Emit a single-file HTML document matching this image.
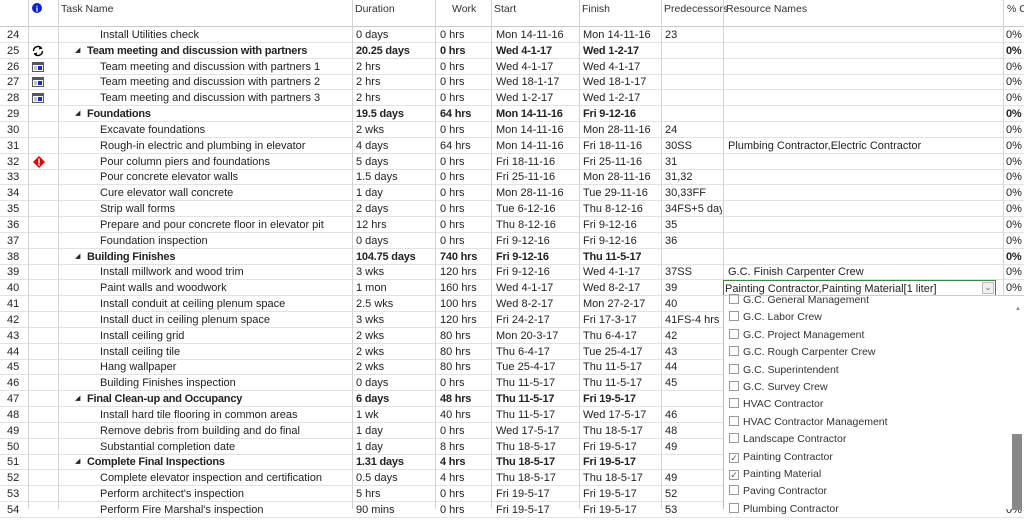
<!DOCTYPE html>
<html><head><meta charset="utf-8">
<style>
*{margin:0;padding:0;box-sizing:border-box}
body{width:1024px;height:509px;overflow:hidden;background:#fff;font-family:"Liberation Sans",sans-serif;font-size:11px;color:#222;position:relative}
.hdr{position:absolute;left:0;top:0;width:1024px;height:27px;background:#fff;border-bottom:1px solid #c8c8c8}
.h{position:absolute;top:3px;font-size:10.5px;color:#333;white-space:nowrap}
.vl{position:absolute;top:0;width:1px;background:#d4d4d4;height:509px}
.row{position:absolute;left:0;width:1024px;height:16px;border-bottom:1px solid #e2e2e2}
.c{position:absolute;top:2px;white-space:nowrap;overflow:hidden}
.b{font-weight:bold;letter-spacing:-0.2px}
.dd{position:absolute;left:723px;top:295px;width:301px;height:214px;background:#fff;border-left:1px solid #bbb;border-top:1px solid #ccc}
.it{position:absolute;left:5px;height:17px;font-size:10.5px;color:#333;white-space:nowrap}
.cb{display:inline-block;width:10px;height:10px;border:1px solid #999;vertical-align:-1px;margin-right:4px;font-size:9px;line-height:8px;text-align:center;color:#555}
</style></head><body>
<div id="rows"></div>
<div class="hdr">
<svg style="position:absolute;left:32px;top:3px" width="10" height="10"><circle cx="5" cy="5" r="5" fill="#1020d0"/><text x="5" y="8.5" font-size="8" fill="#fff" text-anchor="middle" font-weight="bold" font-family="Liberation Serif">i</text></svg>
<div class="h" style="left:61px">Task Name</div>
<div class="h" style="left:355px">Duration</div>
<div class="h" style="left:452px">Work</div>
<div class="h" style="left:494px">Start</div>
<div class="h" style="left:582px">Finish</div>
<div class="h" style="left:664px">Predecessors</div>
<div class="h" style="left:726px">Resource Names</div>
<div class="h" style="left:1007px">% C</div>
</div>
<div class="vl" style="left:28px"></div><div class="vl" style="left:58px"></div><div class="vl" style="left:352px"></div><div class="vl" style="left:435px"></div><div class="vl" style="left:491px"></div><div class="vl" style="left:579px"></div><div class="vl" style="left:661px"></div><div class="vl" style="left:723px"></div><div class="vl" style="left:1003px"></div>
<div style="position:absolute;left:723px;top:280px;width:273px;height:16px;border:1px solid #3a8a3a;background:#fff;font-size:11px;padding:2px 0 0 1px;white-space:nowrap;overflow:hidden">Painting Contractor,Painting Material[1 liter]</div>
<div style="position:absolute;left:982px;top:282px;width:12px;height:12px;border:1px solid #bbb;background:#f0f0f0;font-size:8px;text-align:center;line-height:10px;color:#666">⌄</div>
<div class="dd" id="dd">
<div style="position:absolute;right:2px;top:138px;width:10px;height:76px;background:#888"></div>
<div style="position:absolute;right:3px;top:10px;font-size:6px;color:#888">▲</div>
</div>
<script>
var R=[
[24,0,'','Install Utilities check','0 days','0 hrs','Mon 14-11-16','Mon 14-11-16','23',''],
[25,1,'r','Team meeting and discussion with partners','20.25 days','0 hrs','Wed 4-1-17','Wed 1-2-17','',''],
[26,2,'k','Team meeting and discussion with partners 1','2 hrs','0 hrs','Wed 4-1-17','Wed 4-1-17','',''],
[27,2,'k','Team meeting and discussion with partners 2','2 hrs','0 hrs','Wed 18-1-17','Wed 18-1-17','',''],
[28,2,'k','Team meeting and discussion with partners 3','2 hrs','0 hrs','Wed 1-2-17','Wed 1-2-17','',''],
[29,1,'','Foundations','19.5 days','64 hrs','Mon 14-11-16','Fri 9-12-16','',''],
[30,0,'','Excavate foundations','2 wks','0 hrs','Mon 14-11-16','Mon 28-11-16','24',''],
[31,0,'','Rough-in electric and plumbing in elevator','4 days','64 hrs','Mon 14-11-16','Fri 18-11-16','30SS','Plumbing Contractor,Electric Contractor'],
[32,0,'d','Pour column piers and foundations','5 days','0 hrs','Fri 18-11-16','Fri 25-11-16','31',''],
[33,0,'','Pour concrete elevator walls','1.5 days','0 hrs','Fri 25-11-16','Mon 28-11-16','31,32',''],
[34,0,'','Cure elevator wall concrete','1 day','0 hrs','Mon 28-11-16','Tue 29-11-16','30,33FF',''],
[35,0,'','Strip wall forms','2 days','0 hrs','Tue 6-12-16','Thu 8-12-16','34FS+5 days',''],
[36,0,'','Prepare and pour concrete floor in elevator pit','12 hrs','0 hrs','Thu 8-12-16','Fri 9-12-16','35',''],
[37,0,'','Foundation inspection','0 days','0 hrs','Fri 9-12-16','Fri 9-12-16','36',''],
[38,1,'','Building Finishes','104.75 days','740 hrs','Fri 9-12-16','Thu 11-5-17','',''],
[39,0,'','Install millwork and wood trim','3 wks','120 hrs','Fri 9-12-16','Wed 4-1-17','37SS','G.C. Finish Carpenter Crew'],
[40,0,'','Paint walls and woodwork','1 mon','160 hrs','Wed 4-1-17','Wed 8-2-17','39',''],
[41,0,'','Install conduit at ceiling plenum space','2.5 wks','100 hrs','Wed 8-2-17','Mon 27-2-17','40',''],
[42,0,'','Install duct in ceiling plenum space','3 wks','120 hrs','Fri 24-2-17','Fri 17-3-17','41FS-4 hrs',''],
[43,0,'','Install ceiling grid','2 wks','80 hrs','Mon 20-3-17','Thu 6-4-17','42',''],
[44,0,'','Install ceiling tile','2 wks','80 hrs','Thu 6-4-17','Tue 25-4-17','43',''],
[45,0,'','Hang wallpaper','2 wks','80 hrs','Tue 25-4-17','Thu 11-5-17','44',''],
[46,0,'','Building Finishes inspection','0 days','0 hrs','Thu 11-5-17','Thu 11-5-17','45',''],
[47,1,'','Final Clean-up and Occupancy','6 days','48 hrs','Thu 11-5-17','Fri 19-5-17','',''],
[48,0,'','Install hard tile flooring in common areas','1 wk','40 hrs','Thu 11-5-17','Wed 17-5-17','46',''],
[49,0,'','Remove debris from building and do final','1 day','0 hrs','Wed 17-5-17','Thu 18-5-17','48',''],
[50,0,'','Substantial completion date','1 day','8 hrs','Thu 18-5-17','Fri 19-5-17','49',''],
[51,1,'','Complete Final Inspections','1.31 days','4 hrs','Thu 18-5-17','Fri 19-5-17','',''],
[52,0,'','Complete elevator inspection and certification','0.5 days','4 hrs','Thu 18-5-17','Thu 18-5-17','49',''],
[53,0,'','Perform architect\'s inspection','5 hrs','0 hrs','Fri 19-5-17','Fri 19-5-17','52',''],
[54,0,'','Perform Fire Marshal\'s inspection','90 mins','0 hrs','Fri 19-5-17','Fri 19-5-17','53','']
];
var h='';
R.forEach(function(r,i){
 var top=27+i*15.83, b=r[1]==1?' b':'';
 var icon='';
 if(r[2]=='r')icon='<svg class="c" style="left:31px;top:1px" width="14" height="14"><path d="M2.5 7a4.5 4.5 0 0 1 8-2.8M11.5 7a4.5 4.5 0 0 1-8 2.8" stroke="#000" stroke-width="1.4" fill="none"/><path d="M8.5 2l3 2.5-3.5 1z M5.5 12l-3-2.5 3.5-1z" fill="#000"/></svg>';
 if(r[2]=='k')icon='<svg class="c" style="left:32px;top:3px" width="12" height="10"><rect x="0.5" y="0.5" width="11" height="9" fill="#fff" stroke="#556"/><rect x="1" y="1" width="10" height="2" fill="#556"/><rect x="6" y="4" width="4" height="4" fill="#1030c0"/><path d="M2 5h3M2 7h3" stroke="#889"/></svg>';
 if(r[2]=='d')icon='<svg class="c" style="left:33px;top:2px" width="12" height="12"><path d="M6 0L12 6 6 12 0 6z" fill="#e00"/><rect x="5.2" y="2.5" width="1.6" height="5" fill="#fff"/><rect x="5.2" y="8.3" width="1.6" height="1.4" fill="#fff"/></svg>';
 var tx=r[1]==1?'<span style="position:absolute;left:75px;top:3px;font-size:7px">◢</span><div class="c'+b+'" style="left:87px">'+r[3]+'</div>':'<div class="c" style="left:100px;width:250px">'+r[3]+'</div>';
 h+='<div class="row" style="top:'+top+'px"><div class="c" style="left:7px">'+r[0]+'</div>'+icon+tx+
 '<div class="c'+b+'" style="left:356px">'+r[4]+'</div><div class="c'+b+'" style="left:440px">'+r[5]+'</div><div class="c'+b+'" style="left:496px">'+r[6]+'</div><div class="c'+b+'" style="left:583px">'+r[7]+'</div><div class="c" style="left:665px;width:57px">'+r[8]+'</div><div class="c" style="left:728px">'+r[9]+'</div><div class="c'+b+'" style="left:1006px">0%</div></div>';
});
document.getElementById('rows').innerHTML=h;
var L=['G.C. General Management','G.C. Labor Crew','G.C. Project Management','G.C. Rough Carpenter Crew','G.C. Superintendent','G.C. Survey Crew','HVAC Contractor','HVAC Contractor Management','Landscape Contractor','Painting Contractor','Painting Material','Paving Contractor','Plumbing Contractor'];
var d='';
L.forEach(function(s,i){var ck=(i==9||i==10)?'✓':'';d+='<div class="it" style="top:'+(-2+i*17.4)+'px"><span class="cb">'+ck+'</span>'+s+'</div>';});
document.getElementById('dd').insertAdjacentHTML('afterbegin',d);
</script>
</body></html>
